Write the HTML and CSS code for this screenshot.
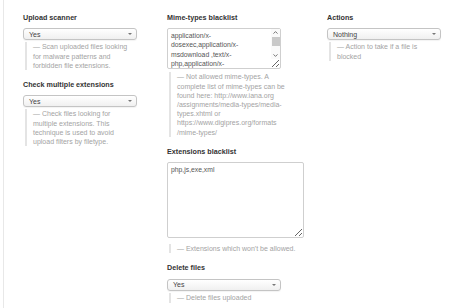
FILE: index.html
```html
<!DOCTYPE html>
<html>
<head>
<meta charset="utf-8">
<link rel="stylesheet" href="styles.css">
</head>
<body>
<div class="page">
  <div class="col col-1">
    <div class="field">
      <div class="label">Upload scanner</div>
      <div class="select"><span>Yes</span><span class="caret"></span></div>
      <div class="help">— Scan uploaded files looking for malware patterns and forbidden file extensions.</div>
    </div>
    <div class="field">
      <div class="label">Check multiple extensions</div>
      <div class="select"><span>Yes</span><span class="caret"></span></div>
      <div class="help">— Check files looking for multiple extensions. This technique is used to avoid upload filters by filetype.</div>
    </div>
  </div>
  <div class="col col-2">
    <div class="field">
      <div class="label">Mime-types blacklist</div>
      <div class="ta-wrap">
        <textarea class="ta ta-mime">application/x-dosexec,application/x-msdownload ,text/x-php,application/x-shellscript,application/javascript,application/x-sh,text/x-sh</textarea>
        <div class="fake-scroll">
          <span class="sbtn"><svg width="5" height="3" viewBox="0 0 5 3"><polyline points="0.5,2.6 2.5,0.6 4.5,2.6" fill="none" stroke="#666" stroke-width="0.9"/></svg></span>
          <span class="thumb"></span>
          <span class="sbtn"><svg width="5" height="3" viewBox="0 0 5 3"><polyline points="0.5,0.4 2.5,2.4 4.5,0.4" fill="none" stroke="#666" stroke-width="0.9"/></svg></span>
        </div>
      </div>
      <div class="help help-wide">— Not allowed mime-types. A complete list of mime-types can be found here: http://www.iana.org<wbr>/assignments/media-types/media-types.xhtml or https://www.digipres.org/formats<wbr>/mime-types/</div>
    </div>
    <div class="field">
      <div class="label">Extensions blacklist</div>
      <textarea class="ta ta-ext">php,js,exe,xml</textarea>
      <div class="help help-ext">— Extensions which won't be allowed.</div>
    </div>
    <div class="field">
      <div class="label">Delete files</div>
      <div class="select"><span>Yes</span><span class="caret"></span></div>
      <div class="help">— Delete files uploaded</div>
    </div>
  </div>
  <div class="col col-3">
    <div class="field">
      <div class="label">Actions</div>
      <div class="select"><span>Nothing</span><span class="caret"></span></div>
      <div class="help">— Action to take if a file is blocked</div>
    </div>
  </div>
</div>
</body>
</html>
```
FILE: styles.css
```css
* { box-sizing: border-box; }
html, body { margin: 0; padding: 0; background: #fff; }
body {
  font-family: "Liberation Sans", Arial, sans-serif;
  color: #333;
}
.page {
  margin-left: 3px;
  border-left: 1px solid #e8e8e8;
  min-height: 308px;
  padding: 12.5px 0 0 19px;
  display: grid;
  grid-template-columns: 144px 160px 1fr;
  align-items: start;
}
.col { display: flex; flex-direction: column; }
.field + .field { margin-top: 9.5px; }
.col-2 .field + .field { margin-top: 10px; }
.label {
  font-size: 7.2px;
  line-height: 9px;
  font-weight: bold;
  color: #333;
  margin-bottom: 6.5px;
}
.select {
  width: 114px;
  height: 12px;
  border: 1px solid #c4c4c4;
  border-radius: 3px;
  background: linear-gradient(#ffffff, #f0f0f0);
  box-shadow: 0 1px 1px rgba(0,0,0,0.05);
  display: flex;
  align-items: center;
  justify-content: space-between;
  padding: 0 4px 0 5px;
  font-size: 7px;
  color: #444;
}
.caret {
  width: 0; height: 0;
  border-left: 2px solid transparent;
  border-right: 2px solid transparent;
  border-top: 2.5px solid #777;
}
.help {
  margin: 2px 0 0 2px;
  width: 111px;
  border-left: 2px solid #e4e4e4;
  padding: 0.4px 0 0 6px;
  font-size: 7px;
  line-height: 9.2px;
  color: #a3a3a3;
}
.help-wide { width: 128px; margin-top: 3px; }
.help-ext { width: 135px; margin-top: 5.5px; }
.ta {
  display: block;
  margin: 0;
  border: 1px solid #cfcfcf;
  border-radius: 2px;
  font-family: "Liberation Sans", Arial, sans-serif;
  font-size: 6.8px;
  line-height: 9.4px;
  color: #555;
  padding: 2px 3px;
  background: #fff;
  overflow: hidden;
}
.ta-wrap { position: relative; width: 114px; }
.ta-mime { width: 114px; height: 41px; padding-right: 12px; resize: vertical; }
.ta-ext { width: 137px; height: 76px; }
.fake-scroll {
  position: absolute;
  right: 1px;
  top: 1px;
  width: 9px;
  height: 30px;
  display: flex;
  flex-direction: column;
  align-items: center;
  background: #fafafa;
}
.sbtn { height: 7px; display: flex; align-items: center; justify-content: center; }
.thumb { width: 8px; height: 9px; background: #c9c9c9; margin: 1px 0 6px; }
```
